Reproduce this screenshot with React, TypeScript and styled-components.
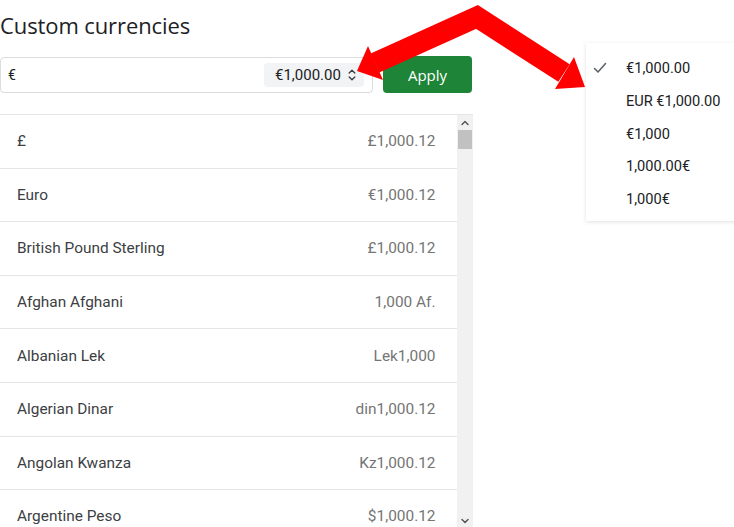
import React from 'react';
import styled, { createGlobalStyle } from 'styled-components';

interface Currency {
    name: string;
    sample: string;
}

const currencies: Currency[] = [
    { name: '£', sample: '£1,000.12' },
    { name: 'Euro', sample: '€1,000.12' },
    { name: 'British Pound Sterling', sample: '£1,000.12' },
    { name: 'Afghan Afghani', sample: '1,000 Af.' },
    { name: 'Albanian Lek', sample: 'Lek1,000' },
    { name: 'Algerian Dinar', sample: 'din1,000.12' },
    { name: 'Angolan Kwanza', sample: 'Kz1,000.12' },
    { name: 'Argentine Peso', sample: '$1,000.12' },
];

const formats = ['€1,000.00', 'EUR €1,000.00', '€1,000', '1,000.00€', '1,000€'];

const GlobalStyle = createGlobalStyle`
    body {
        margin: 0;
        background: #ffffff;
        font-family: Roboto, 'Liberation Sans', sans-serif;
    }
`;

const UpDownIcon = () => (
    <svg width="8" height="12" viewBox="0 0 8 12" fill="none" stroke="#3c4043" strokeWidth="1.4" strokeLinecap="round" strokeLinejoin="round">
        <path d="M1.2 4 L4 1.3 L6.8 4" />
        <path d="M1.2 8 L4 10.7 L6.8 8" />
    </svg>
);

const CheckIcon = () => (
    <svg width="14" height="12" viewBox="0 0 14 12" fill="none" stroke="#5f6368" strokeWidth="1.6" strokeLinecap="round" strokeLinejoin="round">
        <path d="M1.5 6.5 L5 10 L12.5 1.5" />
    </svg>
);

const Chevron = ({ down }: { down?: boolean }) => (
    <svg width="8" height="6" viewBox="0 0 8 6" fill="none" stroke="#505050" strokeWidth="1.4" strokeLinecap="round" strokeLinejoin="round">
        {down ? <path d="M1 1.5 L4 4.5 L7 1.5" /> : <path d="M1 4.5 L4 1.5 L7 4.5" />}
    </svg>
);

// the two red callout arrows drawn over the screenshot
const Arrows = () => (
    <ArrowLayer width="734" height="527" viewBox="0 0 734 527">
        <polyline points="375,63 477,17 564,73" fill="none" stroke="#ff0000" strokeWidth="21" strokeLinejoin="miter" strokeMiterlimit="4" />
        <polygon points="357,71 383,80 368,46" fill="#ff0000" />
        <polygon points="585,87 574,57 555,89" fill="#ff0000" />
    </ArrowLayer>
);

const App = () => {
    return (
        <React.Fragment>
            <GlobalStyle />
            <Page>
                <Panel>
                    <Title>Custom currencies</Title>
                    <FormRow>
                        <CurrencyInput>
                            <Symbol>€</Symbol>
                            <FormatChip>
                                €1,000.00
                                <UpDownIcon />
                            </FormatChip>
                        </CurrencyInput>
                        <ApplyButton>Apply</ApplyButton>
                    </FormRow>
                    <ListFrame>
                        <RowList>
                            {currencies.map((c) => (
                                <Row key={c.name}>
                                    <RowName>{c.name}</RowName>
                                    <RowSample>{c.sample}</RowSample>
                                </Row>
                            ))}
                        </RowList>
                        <Scrollbar>
                            <ScrollButton><Chevron /></ScrollButton>
                            <Thumb />
                            <Track />
                            <ScrollButton><Chevron down /></ScrollButton>
                        </Scrollbar>
                    </ListFrame>
                </Panel>
                <Menu>
                    {formats.map((f, i) => (
                        <MenuItem key={f}>
                            <CheckSlot>{i === 0 && <CheckIcon />}</CheckSlot>
                            {f}
                        </MenuItem>
                    ))}
                </Menu>
                <Arrows />
            </Page>
        </React.Fragment>
    );
};

const Page = styled.div`
    position: relative;
    width: 734px;
    height: 527px;
    overflow: hidden;
`;

const Panel = styled.div`
    width: 473px;
    display: flex;
    flex-direction: column;
`;

const Title = styled.h1`
    margin: 0;
    height: 57px;
    padding-top: 10px;
    box-sizing: border-box;
    font-family: 'Open Sans', sans-serif;
    font-weight: 400;
    font-size: 22px;
    line-height: 30px;
    color: #202124;
    letter-spacing: -0.1px;
`;

const FormRow = styled.div`
    display: flex;
    gap: 10px;
    height: 36px;
`;

const CurrencyInput = styled.div`
    width: 373px;
    box-sizing: border-box;
    border: 1px solid #dadce0;
    border-radius: 4px;
    display: flex;
    align-items: center;
    justify-content: space-between;
    padding: 0 8px 0 7px;
`;

const Symbol = styled.span`
    font-size: 14px;
    color: #202124;
`;

const FormatChip = styled.div`
    height: 24px;
    width: 100px;
    box-sizing: border-box;
    background: #f1f3f4;
    border-radius: 4px;
    display: flex;
    align-items: center;
    justify-content: space-between;
    padding: 0 8px 0 11px;
    font-size: 15px;
    color: #202124;
`;

const ApplyButton = styled.button`
    width: 89px;
    height: 37px;
    margin-top: -1px;
    border: none;
    border-radius: 4px;
    background: #1e8438;
    color: #ffffff;
    font-family: 'Open Sans', sans-serif;
    font-size: 15px;
    font-weight: 500;
    padding: 0;
`;

const ListFrame = styled.div`
    margin-top: 21px;
    height: 413px;
    display: flex;
    border-top: 1px solid #e6e6e6;
`;

const RowList = styled.div`
    flex: 1;
    overflow: hidden;
`;

const Row = styled.div`
    height: 53.6px;
    box-sizing: border-box;
    border-bottom: 1px solid #e6e6e6;
    display: flex;
    align-items: center;
    justify-content: space-between;
    padding: 0 21.5px 0 17px;
    font-size: 15.4px;
`;

const RowName = styled.span`
    color: #3c4043;
`;

const RowSample = styled.span`
    color: #757575;
`;

const Scrollbar = styled.div`
    width: 16px;
    background: #f1f1f1;
    display: flex;
    flex-direction: column;
`;

const ScrollButton = styled.div`
    height: 15px;
    display: flex;
    align-items: center;
    justify-content: center;
`;

const Thumb = styled.div`
    height: 19px;
    margin: 0 1px;
    background: #c1c1c1;
`;

const Track = styled.div`
    flex: 1;
`;

const Menu = styled.div`
    position: absolute;
    left: 586px;
    top: 43px;
    width: 170px;
    padding: 9px 0 6px;
    background: #ffffff;
    box-shadow: 0 1px 4px rgba(60, 64, 67, 0.16);
`;

const MenuItem = styled.div`
    height: 32.7px;
    display: flex;
    align-items: center;
    padding-left: 7px;
    font-size: 14.6px;
    color: #202124;
`;

const CheckSlot = styled.span`
    width: 33px;
    display: flex;
    align-items: center;
`;

const ArrowLayer = styled.svg`
    position: absolute;
    left: 0;
    top: 0;
    pointer-events: none;
`;

export default App;
